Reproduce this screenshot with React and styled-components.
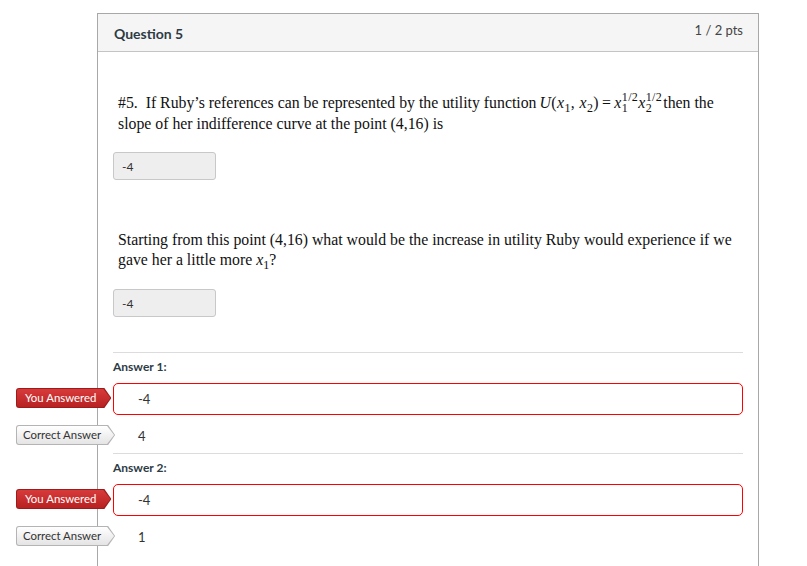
import React from 'react';
import styled, { createGlobalStyle } from 'styled-components';

const GlobalStyle = createGlobalStyle`
  html, body {
    margin: 0;
    background: #fff;
    font-family: Lato, "Liberation Sans", sans-serif;
  }
`;

const Page = styled.div`
  padding: 13px 0 0 97px;
  height: 553px;
  overflow: hidden;
`;

const Card = styled.div`
  width: 660px;
  min-height: 600px;
  border: 1px solid #a8a8a8;
  border-bottom: none;
`;

const Header = styled.div`
  height: 37px;
  display: flex;
  align-items: center;
  justify-content: space-between;
  padding: 0 15px 0 16px;
  background: #f5f5f5;
  border-bottom: 1px solid #c4c4c4;
`;

const Title = styled.span`
  font-size: 14px;
  font-weight: 700;
  color: #2d3b45;
  margin-top: 2px;
`;

const Points = styled.span`
  font-size: 13px;
  color: #444;
  margin-top: -6px;
`;

const Body = styled.div`
  padding: 40px 15px 0;
`;

const Prompt = styled.p`
  margin: 0;
  padding: 0 0 0 5px;
  font-family: "Liberation Serif", "Times New Roman", serif;
  font-size: 15.8px;
  line-height: 20px;
  color: #111;
  margin-top: ${(p) => p.$top || 0}px;
`;

const Math = styled.span`
  margin-left: 3px;
  letter-spacing: 0.4px;
`;

const Var = styled.i`
  font-family: "Liberation Serif", "Times New Roman", serif;
`;

const Eq = styled.span`
  margin: 0 3px;
`;

const Sub = styled.sub`
  font-size: 12px;
  line-height: 0;
`;

const Scripts = styled.span`
  display: inline-block;
  font-size: 12px;
  line-height: 11px;
  vertical-align: -4px;
  margin-right: ${(p) => p.$gap || 0}px;

  & > span {
    display: block;
  }
`;

const AnswerBox = styled.div`
  width: 103px;
  height: 28px;
  box-sizing: border-box;
  margin-top: ${(p) => p.$top}px;
  padding-left: 8px;
  display: flex;
  align-items: center;
  background: #eeeeee;
  border: 1px solid #c8c8c8;
  border-radius: 3px;
  font-size: 12px;
  color: #333;
`;

const Answers = styled.div`
  margin-top: 35px;
`;

const Block = styled.div`
  border-top: 1px solid #dcdcdc;
  padding-top: 7px;
`;

const BlockLabel = styled.div`
  font-size: 12px;
  font-weight: 700;
  color: #2d3b45;
  line-height: 14px;
  margin-bottom: 9px;
`;

const Row = styled.div`
  position: relative;
  box-sizing: border-box;
  height: ${(p) => (p.$wrong ? 32 : 38)}px;
  display: flex;
  align-items: center;
  padding-left: 24px;
  font-size: 13px;
  color: #333;
  border: ${(p) => (p.$wrong ? '1px solid #f00' : '1px solid transparent')};
  border-radius: 5px;
  padding-top: ${(p) => (p.$wrong ? 0 : 3)}px;
`;

const arrow = 'polygon(0 0, calc(100% - 7px) 0, 100% 50%, calc(100% - 7px) 100%, 0 100%)';

const Tag = styled.span`
  position: absolute;
  left: -98px;
  top: 50%;
  transform: translateY(${(p) => (p.$wrong ? -11 : -9)}px);
  padding: 1px;
  border-radius: 3px 0 0 3px;
  background: ${(p) => (p.$wrong ? '#9e1b1b' : '#b4b4b4')};
  clip-path: ${arrow};
`;

const TagFace = styled.span`
  display: block;
  height: 18px;
  line-height: 18px;
  padding: 0 ${(p) => (p.$wrong ? 14 : 13)}px 0 ${(p) => (p.$wrong ? 8 : 6)}px;
  font-size: 11.4px;
  white-space: nowrap;
  border-radius: 2px 0 0 2px;
  clip-path: ${arrow};
  color: ${(p) => (p.$wrong ? '#fff' : '#333')};
  background: ${(p) =>
    p.$wrong
      ? 'linear-gradient(#d83a3a, #b82222)'
      : 'linear-gradient(#ffffff, #e4e4e4)'};
`;

function Label({ wrong, children }) {
  return (
    <Tag $wrong={wrong}>
      <TagFace $wrong={wrong}>{children}</TagFace>
    </Tag>
  );
}

function X({ sub, sup, gap }) {
  if (!sup) {
    return (
      <>
        <Var>x</Var>
        <Sub>{sub}</Sub>
      </>
    );
  }
  return (
    <>
      <Var>x</Var>
      <Scripts $gap={gap}>
        <span>{sup}</span>
        <span>{sub}</span>
      </Scripts>
    </>
  );
}

const answers = [
  { name: 'Answer 1:', given: '-4', correct: '4' },
  { name: 'Answer 2:', given: '-4', correct: '1' },
];

export default function App() {
  return (
    <>
      <GlobalStyle />
      <Page>
        <Card>
          <Header>
            <Title>Question 5</Title>
            <Points>1 / 2 pts</Points>
          </Header>
          <Body>
            <Prompt>
              #5.&nbsp;&nbsp;If Ruby’s references can be represented by the utility function
              <Math>
                <Var>U</Var>(<X sub="1" />, <X sub="2" />)<Eq>=</Eq>
                <X sub="1" sup="1/2" />
                <X sub="2" sup="1/2" gap={1} />
              </Math>
              then the slope of her indifference curve at the point (4,16) is
            </Prompt>
            <AnswerBox $top={18}>-4</AnswerBox>
            <Prompt $top={50}>
              Starting from this point (4,16) what would be the increase in utility Ruby would
              experience if we gave her a little more <X sub="1" />?
            </Prompt>
            <AnswerBox $top={19}>-4</AnswerBox>
            <Answers>
              {answers.map((a) => (
                <Block key={a.name}>
                  <BlockLabel>{a.name}</BlockLabel>
                  <Row $wrong>
                    <Label wrong>You Answered</Label>
                    {a.given}
                  </Row>
                  <Row>
                    <Label>Correct Answer</Label>
                    {a.correct}
                  </Row>
                </Block>
              ))}
            </Answers>
          </Body>
        </Card>
      </Page>
    </>
  );
}
